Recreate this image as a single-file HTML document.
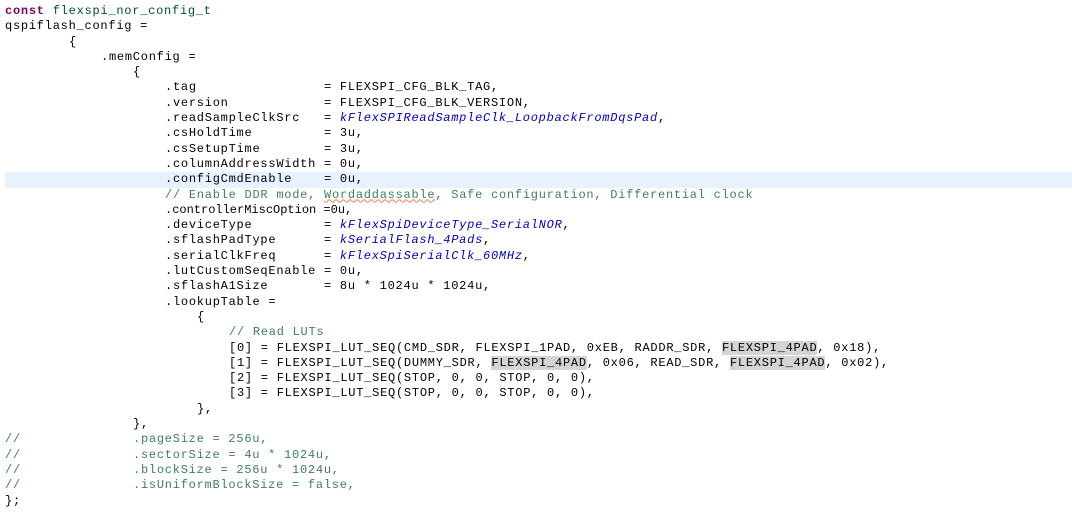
<!DOCTYPE html>
<html><head><meta charset="utf-8"><style>
html,body{margin:0;padding:0;background:#fff;width:1072px;height:512px;overflow:hidden}
.c{position:absolute;left:0;top:4px;width:1072px;font-family:"Liberation Mono",monospace;font-size:12px;color:#000;letter-spacing:0.75px}
.l{height:15.3px;line-height:15.3px;white-space:pre;position:relative}
.l span.t{position:absolute;top:0}
.hl{background:#e8f2fe;margin-left:5px}
.k{color:#7f0055;font-weight:bold}
.ty{color:#005032}
.cm{color:#3f7f5f}
.e{color:#0000c0;font-style:italic}
.g{background:#d4d4d4}
.sq{text-decoration:underline wavy #f08050;text-decoration-thickness:1px}
</style></head><body><div class="c">
<div class="l"><span class="t" style="left:5px"><span class="k">const</span> <span class="ty">flexspi_nor_config_t</span></span></div>
<div class="l"><span class="t" style="left:5px">qspiflash_config =</span></div>
<div class="l"><span class="t" style="left:69px">{</span></div>
<div class="l"><span class="t" style="left:101px">.memConfig =</span></div>
<div class="l"><span class="t" style="left:133px">{</span></div>
<div class="l"><span class="t" style="left:165px">.tag</span><span class="t" style="left:324px">= FLEXSPI_CFG_BLK_TAG,</span></div>
<div class="l"><span class="t" style="left:165px">.version</span><span class="t" style="left:324px">= FLEXSPI_CFG_BLK_VERSION,</span></div>
<div class="l"><span class="t" style="left:165px">.readSampleClkSrc</span><span class="t" style="left:324px">= <span class="e">kFlexSPIReadSampleClk_LoopbackFromDqsPad</span>,</span></div>
<div class="l"><span class="t" style="left:165px">.csHoldTime</span><span class="t" style="left:324px">= 3u,</span></div>
<div class="l"><span class="t" style="left:165px">.csSetupTime</span><span class="t" style="left:324px">= 3u,</span></div>
<div class="l"><span class="t" style="left:165px">.columnAddressWidth</span><span class="t" style="left:324px">= 0u,</span></div>
<div class="l hl"><span class="t" style="left:160px">.configCmdEnable</span><span class="t" style="left:319px">= 0u,</span></div>
<div class="l"><span class="t cm" style="left:165px">// Enable DDR mode, <span class="sq">Wordaddassable</span>, Safe configuration, Differential clock</span></div>
<div class="l"><span class="t" style="left:165px;letter-spacing:0">.controllerMiscOption =0u,</span></div>
<div class="l"><span class="t" style="left:165px">.deviceType</span><span class="t" style="left:324px">= <span class="e">kFlexSpiDeviceType_SerialNOR</span>,</span></div>
<div class="l"><span class="t" style="left:165px">.sflashPadType</span><span class="t" style="left:324px">= <span class="e">kSerialFlash_4Pads</span>,</span></div>
<div class="l"><span class="t" style="left:165px">.serialClkFreq</span><span class="t" style="left:324px">= <span class="e">kFlexSpiSerialClk_60MHz</span>,</span></div>
<div class="l"><span class="t" style="left:165px">.lutCustomSeqEnable = 0u,</span></div>
<div class="l"><span class="t" style="left:165px">.sflashA1Size</span><span class="t" style="left:324px">= 8u * 1024u * 1024u,</span></div>
<div class="l"><span class="t" style="left:165px">.lookupTable =</span></div>
<div class="l"><span class="t" style="left:197px">{</span></div>
<div class="l"><span class="t cm" style="left:229px">// Read LUTs</span></div>
<div class="l"><span class="t" style="left:229px">[0] = FLEXSPI_LUT_SEQ(CMD_SDR, FLEXSPI_1PAD, 0xEB, RADDR_SDR, <span class="g">FLEXSPI_4PAD</span>, 0x18),</span></div>
<div class="l"><span class="t" style="left:229px">[1] = FLEXSPI_LUT_SEQ(DUMMY_SDR, <span class="g">FLEXSPI_4PAD</span>, 0x06, READ_SDR, <span class="g">FLEXSPI_4PAD</span>, 0x02),</span></div>
<div class="l"><span class="t" style="left:229px">[2] = FLEXSPI_LUT_SEQ(STOP, 0, 0, STOP, 0, 0),</span></div>
<div class="l"><span class="t" style="left:229px">[3] = FLEXSPI_LUT_SEQ(STOP, 0, 0, STOP, 0, 0),</span></div>
<div class="l"><span class="t" style="left:197px">},</span></div>
<div class="l"><span class="t" style="left:133px">},</span></div>
<div class="l"><span class="t cm" style="left:5px">//</span><span class="t cm" style="left:133px">.pageSize = 256u,</span></div>
<div class="l"><span class="t cm" style="left:5px">//</span><span class="t cm" style="left:133px">.sectorSize = 4u * 1024u,</span></div>
<div class="l"><span class="t cm" style="left:5px">//</span><span class="t cm" style="left:133px">.blockSize = 256u * 1024u,</span></div>
<div class="l"><span class="t cm" style="left:5px">//</span><span class="t cm" style="left:133px">.isUniformBlockSize = false,</span></div>
<div class="l"><span class="t" style="left:5px">};</span></div>
</div></body></html>
